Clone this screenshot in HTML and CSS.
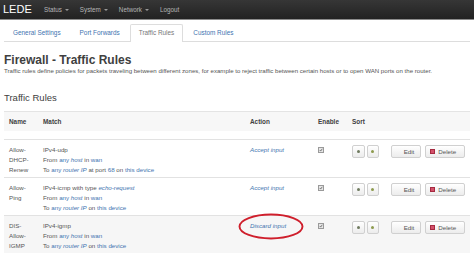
FILE: index.html
```html
<!DOCTYPE html>
<html>
<head>
<meta charset="utf-8">
<title>Firewall - Traffic Rules</title>
<link rel="stylesheet" href="styles.css">
</head>
<body>
<header class="navbar">
  <span class="brand">LEDE</span>
  <nav class="menu">
    <span class="menu-item">Status <i class="caret"></i></span>
    <span class="menu-item">System <i class="caret"></i></span>
    <span class="menu-item">Network <i class="caret"></i></span>
    <span class="menu-item">Logout</span>
  </nav>
</header>
<main class="page">
  <ul class="tabs">
    <li class="tab">General Settings</li>
    <li class="tab">Port Forwards</li>
    <li class="tab active">Traffic Rules</li>
    <li class="tab">Custom Rules</li>
  </ul>
  <h2 class="title">Firewall - Traffic Rules</h2>
  <p class="descr">Traffic rules define policies for packets traveling between different zones, for example to reject traffic between certain hosts or to open WAN ports on the router.</p>
  <h3 class="section-title">Traffic Rules</h3>
  <table class="rules">
    <colgroup>
      <col class="c-name"><col class="c-match"><col class="c-action"><col class="c-enable"><col class="c-sort">
    </colgroup>
    <thead>
      <tr><th>Name</th><th>Match</th><th>Action</th><th>Enable</th><th>Sort</th></tr>
    </thead>
    <tbody>
      <tr class="spacer"><td colspan="5"></td></tr>
      <tr>
        <td>Allow-<br>DHCP-<br>Renew</td>
        <td><div>IPv4-udp</div><div>From <span class="v">any <em>host</em></span> in <span class="v">wan</span></div><div>To <span class="v">any <em>router IP</em></span> at port <span class="v">68</span> on <span class="v">this device</span></div></td>
        <td><a class="act">Accept input</a></td>
        <td><span class="check"><svg viewBox="0 0 6 6"><path d="M1.2 3.2 L2.5 4.6 L4.9 1.2" fill="none" stroke="#333" stroke-width="0.9"/></svg></span></td>
        <td><div class="btns"><span class="btn sort"><i class="up"></i></span><span class="btn sort"><i class="down"></i></span><span class="btn edit">Edit</span><span class="btn del"><i class="x"></i>Delete</span></div></td>
      </tr>
      <tr>
        <td>Allow-<br>Ping</td>
        <td><div>IPv4-icmp with type <span class="v"><em>echo-request</em></span></div><div>From <span class="v">any <em>host</em></span> in <span class="v">wan</span></div><div>To <span class="v">any <em>router IP</em></span> on <span class="v">this device</span></div></td>
        <td><a class="act">Accept input</a></td>
        <td><span class="check"><svg viewBox="0 0 6 6"><path d="M1.2 3.2 L2.5 4.6 L4.9 1.2" fill="none" stroke="#333" stroke-width="0.9"/></svg></span></td>
        <td><div class="btns"><span class="btn sort"><i class="up"></i></span><span class="btn sort"><i class="down"></i></span><span class="btn edit">Edit</span><span class="btn del"><i class="x"></i>Delete</span></div></td>
      </tr>
      <tr class="alt">
        <td>DIS-<br>Allow-<br>IGMP</td>
        <td><div>IPv4-igmp</div><div>From <span class="v">any <em>host</em></span> in <span class="v">wan</span></div><div>To <span class="v">any <em>router IP</em></span> on <span class="v">this device</span></div></td>
        <td><span class="circled"><a class="act">Discard input</a><svg class="ring" viewBox="0 0 66 27"><ellipse cx="33" cy="13.5" rx="31.5" ry="12" fill="none" stroke="#cf1f2c" stroke-width="1.9"/></svg></span></td>
        <td><span class="check"><svg viewBox="0 0 6 6"><path d="M1.2 3.2 L2.5 4.6 L4.9 1.2" fill="none" stroke="#333" stroke-width="0.9"/></svg></span></td>
        <td><div class="btns"><span class="btn sort"><i class="up"></i></span><span class="btn sort"><i class="down"></i></span><span class="btn edit">Edit</span><span class="btn del"><i class="x"></i>Delete</span></div></td>
      </tr>
    </tbody>
  </table>
</main>
</body>
</html>
```

FILE: styles.css
```css
* { box-sizing: border-box; }
html, body { margin: 0; padding: 0; }
body {
  width: 474px;
  height: 257px;
  overflow: hidden;
  background: #fff;
  color: #404040;
  font-family: "Liberation Sans", Arial, sans-serif;
  font-size: 6.3px;
}

/* navbar */
.navbar {
  height: 20px;
  display: flex;
  align-items: center;
  background: linear-gradient(#363636, #222);
  border-bottom: 1px solid #8c8c8c;
}
.brand {
  font-size: 11px;
  color: #fff;
  margin-left: 3px;
  width: 41px;
  line-height: 19px;
}
.menu { display: flex; align-items: center; }
.menu-item {
  color: #b5b5b5;
  font-size: 6.3px;
  margin-right: 11px;
  display: flex;
  align-items: center;
  gap: 2px;
}
.caret {
  display: inline-block;
  width: 0; height: 0;
  border-left: 2px solid transparent;
  border-right: 2px solid transparent;
  border-top: 2px solid #999;
  margin-left: 1px;
}

/* page */
.page { padding: 0 4px; }

.tabs {
  list-style: none;
  margin: 4px 0 0;
  padding: 0;
  display: flex;
  border-bottom: 1px solid #ddd;
  height: 18px;
}
.tab {
  padding: 0 8px;
  line-height: 16px;
  font-size: 6.4px;
  color: #4274b0;
  margin-right: 1px;
  border: 1px solid transparent;
  border-bottom: none;
  border-radius: 2px 2px 0 0;
}
.tab.active {
  border-color: #ddd;
  background: #fff;
  color: #777;
  height: 18px;
}

.title {
  margin: 12px 0 0;
  font-size: 12px;
  line-height: 13px;
  font-weight: bold;
  color: #404040;
}
.descr {
  margin: 0;
  font-size: 6.1px;
  line-height: 8px;
  color: #555;
}
.section-title {
  margin: 17px 0 0;
  font-size: 9.5px;
  line-height: 12px;
  font-weight: normal;
  color: #404040;
}

/* table */
.rules {
  margin-top: 7px;
  width: 466px;
  border-collapse: collapse;
  table-layout: fixed;
}
.c-name { width: 34px; }
.c-match { width: 207px; }
.c-action { width: 68px; }
.c-enable { width: 34px; }
.c-sort { width: 123px; }

.rules th {
  text-align: left;
  font-weight: bold;
  font-size: 6.4px;
  color: #404040;
  height: 19px;
  padding: 0 5px;
  background: #f7f7f7;
  border-top: 1px solid #e4e4e4;
}
.rules td {
  vertical-align: top;
  padding: 5px 5px 2px;
  line-height: 10px;
  font-size: 6.2px;
  color: #555;
  border-top: 1px solid #e2e2e2;
}
.rules tr.spacer td { height: 9px; padding: 0; border-top: none; }
.rules tr.alt td { background: #f6f6f6; }

.v { color: #4274b0; }
.v em { font-style: italic; }
.act { color: #4274b0; font-style: italic; }

.check {
  display: inline-block;
  width: 6px; height: 6px;
  border: 1px solid #9a9a9a;
  background: #e6e6e6;
  vertical-align: middle;
  margin-top: -1px;
}
.check svg { display: block; width: 4px; height: 4px; }

.btns { display: flex; align-items: flex-start; }
.btn {
  height: 13px;
  border: 1px solid #d0d0d0;
  border-radius: 2px;
  background: linear-gradient(#fff, #ececec);
  display: flex;
  align-items: center;
  color: #555;
  font-size: 6.2px;
}
.btn.sort { width: 13px; justify-content: center; margin-right: 2px; }
.btn.sort + .btn.sort { margin-right: 12px; }
.btn.edit { width: 31px; justify-content: flex-end; padding-right: 6px; margin-right: 4px; }
.btn.del { width: 41px; padding-left: 4px; gap: 3px; }
.up, .down {
  display: block;
  width: 3px; height: 3px;
  border-radius: 50%;
  background: #6f7a5f;
}
.down { background: #8d9a4e; }
.x {
  display: block;
  width: 5px; height: 5px;
  background: #d4506a;
  border: 1px solid #a52a40;
}

.circled { position: relative; display: inline-block; }
.ring {
  position: absolute;
  left: -12px;
  top: -8px;
  width: 66px;
  height: 27px;
  overflow: visible;
}
```
